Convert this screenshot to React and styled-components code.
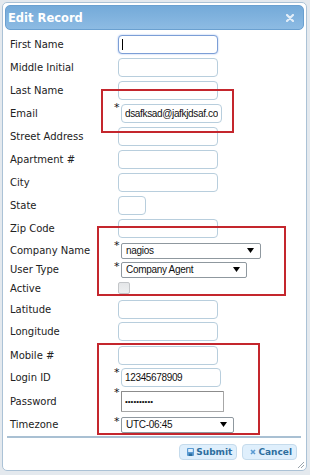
import React from 'react';
import styled, { createGlobalStyle } from 'styled-components';

const GlobalStyle = createGlobalStyle`
  html, body { margin: 0; padding: 0; }
  body { background: #e4e9ee; width: 310px; height: 475px; overflow: hidden; }
`;

const Page = styled.div`
  position: relative;
  width: 310px;
  height: 475px;
  padding: 2px 0 0 2px;
  box-sizing: border-box;
`;

const Dialog = styled.div`
  position: relative;
  width: 305px;
  box-sizing: border-box;
  border: 1px solid #abc2d6;
  border-radius: 5px;
  background: #fff;
  padding: 2px 2px 10px;
  font-family: "DejaVu Sans", Verdana, sans-serif;
`;

const TitleBar = styled.div`
  height: 25px;
  box-sizing: border-box;
  display: flex;
  align-items: center;
  justify-content: space-between;
  padding: 0 9px 0 2px;
  border: 1px solid #6aa0d0;
  border-radius: 5px;
  background: linear-gradient(#74aad9, #8dbbe3);
  color: #fff;
  font-weight: bold;
  font-size: 11.5px;
`;

const Form = styled.div`
  padding: 3px 0 0 5px;
`;

const Row = styled.div`
  display: grid;
  grid-template-columns: 104px auto;
  align-items: center;
  height: ${p => p.$h}px;
`;

const Label = styled.span`
  font-size: 10px;
  color: #222;
  white-space: nowrap;
`;

const Field = styled.div`
  position: relative;
  display: flex;
  align-items: center;
  align-self: stretch;
  padding-left: ${p => (p.$req ? 0 : 4)}px;
`;

const Star = styled.span`
  align-self: flex-start;
  width: 7px;
  font-size: 11px;
  line-height: 12px;
  color: #111;
`;

const TextInput = styled.input`
  box-sizing: border-box;
  width: ${p => p.$w}px;
  height: 19px;
  margin: 0;
  padding: 0 3px;
  border: 1px solid ${p => (p.$focus ? '#7c9ed6' : '#b8cedd')};
  border-radius: 4px;
  box-shadow: ${p => (p.$focus ? '0 0 2px #9cbcef' : 'none')};
  background: #fff;
  font: 10px "Liberation Sans", Arial, sans-serif;
  letter-spacing: -0.35px;
  color: #111;
  outline: none;
`;

const PasswordInput = styled.input`
  box-sizing: border-box;
  width: 103px;
  height: 21px;
  margin: 0;
  padding: 0 3px;
  border: 1px solid #a7a7a7;
  border-top-color: #8c8c8c;
  border-left-color: #8c8c8c;
  border-radius: 1px;
  background: #fff;
  font: 8px "Liberation Sans", Arial, sans-serif;
  color: #111;
  outline: none;
`;

const Caret = styled.span`
  position: absolute;
  left: 8px;
  top: 6px;
  width: 1px;
  height: 11px;
  background: #000;
`;

const SelectBox = styled.div`
  box-sizing: border-box;
  width: ${p => p.$w}px;
  height: 16px;
  display: flex;
  align-items: center;
  justify-content: space-between;
  padding: 0 6px 0 4px;
  border: 1px solid #8f989f;
  border-radius: 2px;
  background: #fff;
  font: 10px "Liberation Sans", Arial, sans-serif;
  letter-spacing: -0.3px;
  color: #111;
`;

const Check = styled.span`
  box-sizing: border-box;
  width: 12px;
  height: 12px;
  border: 1px solid #c3c6c9;
  border-radius: 2px;
  background: linear-gradient(#e4e6e8, #eef0f1);
`;

const Separator = styled.div`
  height: 2px;
  margin: 3px 3px 0 2px;
  background: #a9c0d3;
`;

const ButtonBar = styled.div`
  display: flex;
  justify-content: flex-end;
  gap: 5px;
  margin-top: 6px;
  padding-right: 7px;
`;

const Button = styled.div`
  box-sizing: border-box;
  height: 16px;
  display: flex;
  align-items: center;
  gap: 2px;
  padding: 0 4px 0 7px;
  border: 1px solid #c5dbec;
  border-radius: 4px;
  background: #dfeffc;
  color: #2e6e9e;
  font-weight: bold;
  font-size: 9px;
`;

const Grip = styled.svg`
  position: absolute;
  right: 2px;
  bottom: 2px;
`;

const Highlight = styled.div`
  position: absolute;
  left: ${p => p.$x}px;
  top: ${p => p.$y}px;
  width: ${p => p.$w}px;
  height: ${p => p.$h}px;
  box-sizing: border-box;
  border: 2px solid #c4262d;
  pointer-events: none;
`;

const rows = [
  { label: 'First Name', h: 23, focus: true },
  { label: 'Middle Initial', h: 23 },
  { label: 'Last Name', h: 23 },
  { label: 'Email', h: 23, req: true, value: 'dsafksad@jafkjdsaf.com', w: 101 },
  { label: 'Street Address', h: 23 },
  { label: 'Apartment #', h: 23 },
  { label: 'City', h: 23 },
  { label: 'State', h: 23, w: 28 },
  { label: 'Zip Code', h: 23 },
  { label: 'Company Name', h: 21, kind: 'select', req: true, value: 'nagios', w: 140 },
  { label: 'User Type', h: 17, kind: 'select', req: true, value: 'Company Agent', w: 126 },
  { label: 'Active', h: 20, kind: 'check' },
  { label: 'Latitude', h: 22 },
  { label: 'Longitude', h: 23 },
  { label: 'Mobile #', h: 24 },
  { label: 'Login ID', h: 20, req: true, value: '12345678909' },
  { label: 'Password', h: 29, kind: 'password', req: true, value: '1234567890' },
  { label: 'Timezone', h: 17, kind: 'select', req: true, value: 'UTC-06:45', w: 113 },
];

const Arrow = () => (
  <svg width="7" height="5" viewBox="0 0 7 5">
    <polygon points="0,0 7,0 3.5,5" fill="#000" />
  </svg>
);

function Control({ row }) {
  if (row.kind === 'select') {
    return (
      <SelectBox $w={row.w}>
        <span>{row.value}</span>
        <Arrow />
      </SelectBox>
    );
  }
  if (row.kind === 'check') return <Check />;
  if (row.kind === 'password') return <PasswordInput type="password" readOnly value={row.value} />;
  return (
    <>
      <TextInput readOnly $focus={row.focus} $w={row.w || 100} value={row.value || ''} />
      {row.focus && <Caret />}
    </>
  );
}

export default function App() {
  return (
    <Page>
      <GlobalStyle />
      <Dialog>
        <TitleBar>
          <span>Edit Record</span>
          <svg width="8" height="8" viewBox="0 0 8 8">
            <path d="M1 1 L7 7 M7 1 L1 7" stroke="#e3eef8" strokeWidth="2.2" strokeLinecap="round" />
          </svg>
        </TitleBar>

        <Form>
          {rows.map(row => (
            <Row key={row.label} $h={row.h}>
              <Label>{row.label}</Label>
              <Field $req={row.req}>
                {row.req && <Star>*</Star>}
                <Control row={row} />
              </Field>
            </Row>
          ))}
        </Form>

        <Separator />
        <ButtonBar>
          <Button>
            <svg width="7" height="8" viewBox="0 0 7 8">
              <rect x="0" y="0" width="7" height="8" rx="1" fill="#5b9bd3" />
              <rect x="1.2" y="1" width="4.6" height="3" fill="#dfeffc" />
              <rect x="1.8" y="5.5" width="3.4" height="2.5" fill="#2e6e9e" />
            </svg>
            Submit
          </Button>
          <Button>
            <svg width="6" height="6" viewBox="0 0 6 6">
              <path d="M1 1 L5 5 M5 1 L1 5" stroke="#5b9bd3" strokeWidth="1.6" />
            </svg>
            Cancel
          </Button>
        </ButtonBar>

        <Grip width="6" height="6" viewBox="0 0 6 6">
          <path d="M6 0 L0 6 M6 3 L3 6" stroke="#9aa4ac" strokeWidth="1" />
        </Grip>
      </Dialog>

      <Highlight $x={101} $y={89} $w={133} $h={44} />
      <Highlight $x={97} $y={226} $w={189} $h={70} />
      <Highlight $x={97} $y={343} $w={163} $h={92} />
    </Page>
  );
}
